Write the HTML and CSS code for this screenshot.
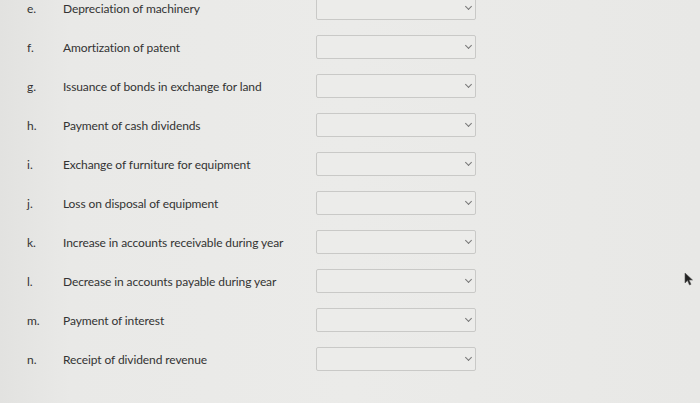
FILE: index.html
```html
<!DOCTYPE html>
<html>
<head>
<meta charset="utf-8">
<link rel="stylesheet" href="styles.css">
</head>
<body>
<div class="list">
  <div class="row"><span class="letter">e.</span><span class="label">Depreciation of machinery</span><div class="select"><span class="chev"></span></div></div>
  <div class="row"><span class="letter">f.</span><span class="label">Amortization of patent</span><div class="select"><span class="chev"></span></div></div>
  <div class="row"><span class="letter">g.</span><span class="label">Issuance of bonds in exchange for land</span><div class="select"><span class="chev"></span></div></div>
  <div class="row"><span class="letter">h.</span><span class="label">Payment of cash dividends</span><div class="select"><span class="chev"></span></div></div>
  <div class="row"><span class="letter">i.</span><span class="label">Exchange of furniture for equipment</span><div class="select"><span class="chev"></span></div></div>
  <div class="row"><span class="letter">j.</span><span class="label">Loss on disposal of equipment</span><div class="select"><span class="chev"></span></div></div>
  <div class="row"><span class="letter">k.</span><span class="label">Increase in accounts receivable during year</span><div class="select"><span class="chev"></span></div></div>
  <div class="row"><span class="letter">l.</span><span class="label">Decrease in accounts payable during year</span><div class="select"><span class="chev"></span></div></div>
  <div class="row"><span class="letter">m.</span><span class="label">Payment of interest</span><div class="select"><span class="chev"></span></div></div>
  <div class="row"><span class="letter">n.</span><span class="label">Receipt of dividend revenue</span><div class="select"><span class="chev"></span></div></div>
</div>
<svg class="cursor" width="10" height="14" viewBox="0 0 10 14"><path d="M1 1 L1 11 L3.5 8.5 L5.5 13 L7 12.3 L5 8 L8.5 8 Z" fill="#222" stroke="#555" stroke-width="0.6"/></svg>
</body>
</html>
```
FILE: styles.css
```css
html, body {
  margin: 0;
  padding: 0;
  width: 700px;
  height: 403px;
  overflow: hidden;
  background: linear-gradient(90deg, #e2e2e0 0%, #e9e9e7 10%, #ebebe9 50%, #e8e8e6 100%);
  font-family: Lato, "Open Sans", sans-serif;
  color: #333;
}
.list {
  display: flex;
  flex-direction: column;
  gap: 15px;
  margin-top: -4px;
}
.row {
  display: flex;
  align-items: center;
  height: 24px;
}
.letter {
  width: 36px;
  padding-left: 27px;
  font-size: 12px;
}
.label {
  width: 253px;
  font-size: 12px;
  letter-spacing: -0.1px;
}
.select {
  width: 154px;
  height: 22px;
  border: 1px solid #c9c9c7;
  border-radius: 2px;
  background: #ececea;
  display: flex;
  align-items: center;
  justify-content: flex-end;
  padding-right: 4px;
}
.chev {
  width: 4px;
  height: 4px;
  border-right: 1px solid #777;
  border-bottom: 1px solid #777;
  transform: rotate(45deg);
  margin-top: -3px;
}
.cursor {
  position: absolute;
  left: 684px;
  top: 272px;
}
```
